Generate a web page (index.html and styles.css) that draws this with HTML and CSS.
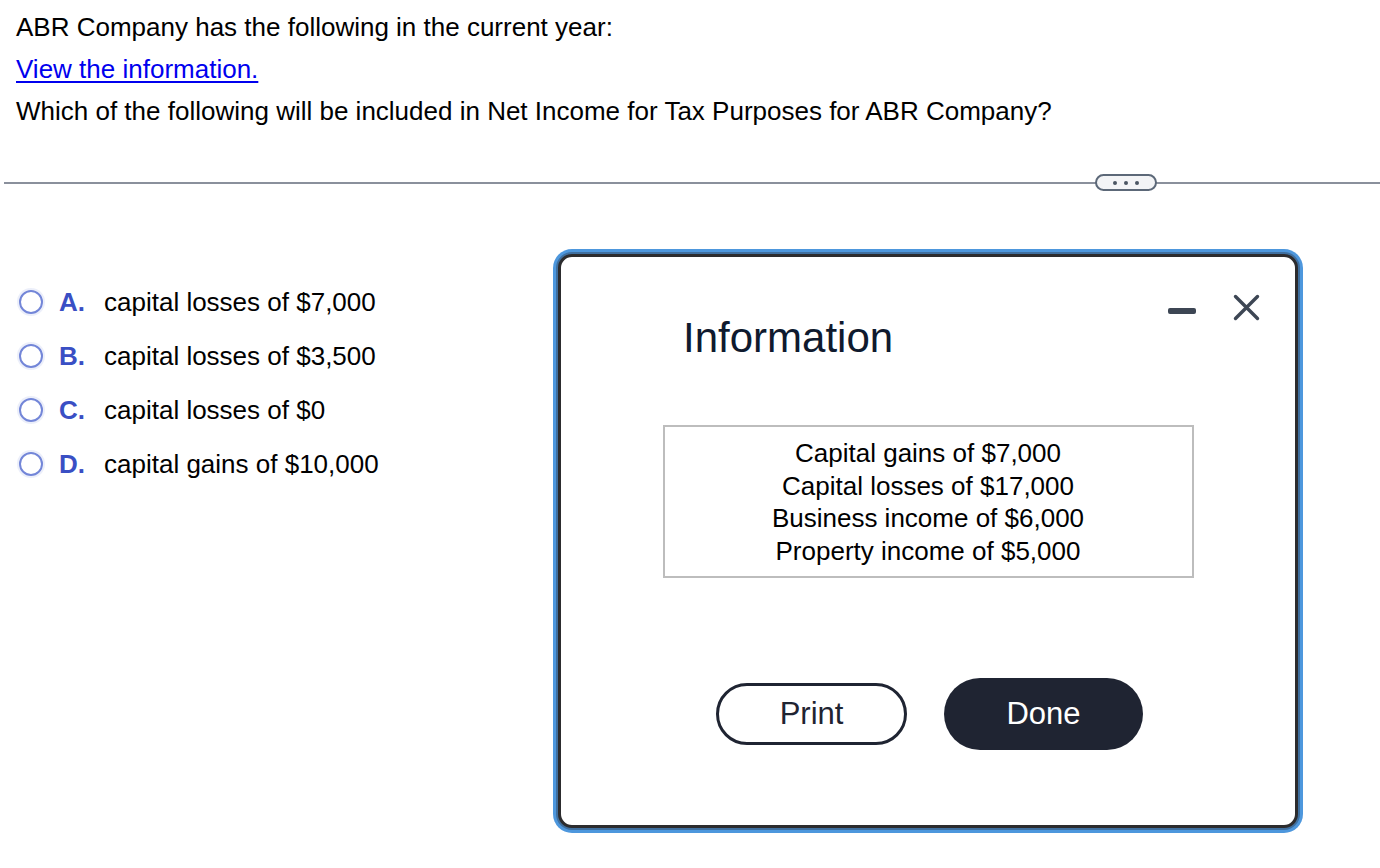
FILE: index.html
```html
<!DOCTYPE html>
<html lang="en">
<head>
<meta charset="utf-8">
<title>ABR Company</title>
<link rel="stylesheet" href="styles.css">
</head>
<body>
<div class="question">
  <p class="line">ABR Company has the following in the current year:</p>
  <p class="line"><a class="link" href="#">View the information.</a></p>
  <p class="line">Which of the following will be included in Net Income for Tax Purposes for ABR Company?</p>
</div>
<div class="divider">
  <span class="pill"><i></i><i></i><i></i></span>
</div>
<ul class="options">
  <li class="option"><span class="radio"></span><span class="letter">A.</span><span class="text">capital losses of $7,000</span></li>
  <li class="option"><span class="radio"></span><span class="letter">B.</span><span class="text">capital losses of $3,500</span></li>
  <li class="option"><span class="radio"></span><span class="letter">C.</span><span class="text">capital losses of $0</span></li>
  <li class="option"><span class="radio"></span><span class="letter">D.</span><span class="text">capital gains of $10,000</span></li>
</ul>
<div class="dialog">
  <div class="dialog-head">
    <h1 class="dialog-title">Information</h1>
    <div class="controls">
      <span class="minimize"></span>
      <svg class="close" width="27" height="27" viewBox="0 0 27 27"><path d="M2.5 2.5 L24.5 24.5 M24.5 2.5 L2.5 24.5" stroke="#3d4654" stroke-width="3.4" stroke-linecap="round" fill="none"/></svg>
    </div>
  </div>
  <div class="info-box">
    <div>Capital gains of $7,000</div>
    <div>Capital losses of $17,000</div>
    <div>Business income of $6,000</div>
    <div>Property income of $5,000</div>
  </div>
  <div class="buttons">
    <button class="btn btn-print">Print</button>
    <button class="btn btn-done">Done</button>
  </div>
</div>
</body>
</html>
```
FILE: styles.css
```css
* { box-sizing: border-box; }
html, body { margin: 0; padding: 0; background: #fff; }
body {
  font-family: "Liberation Sans", Arial, sans-serif;
  font-size: 26px;
  color: #000;
  width: 1380px;
  height: 868px;
  position: relative;
  overflow: hidden;
}
.question { padding: 6px 0 0 16px; }
.line { margin: 0; line-height: 42px; }
.link { color: #0000ee; text-decoration: underline; text-underline-offset: 3px; text-decoration-thickness: 2px; }

.divider {
  position: relative;
  margin: 50px 0 0 4px;
  height: 2px;
  background: #8a909c;
}
.pill {
  position: absolute;
  left: 1091px;
  top: -8px;
  width: 62px;
  height: 17px;
  border: 2px solid #5c6878;
  border-radius: 9px;
  background: #f3f4f6;
  display: flex;
  align-items: center;
  justify-content: center;
  gap: 7px;
}
.pill i { width: 4px; height: 4px; border-radius: 50%; background: #4b5563; }

.options { list-style: none; margin: 91px 0 0; padding: 0; }
.option {
  height: 54px;
  display: flex;
  align-items: center;
  padding-left: 19px;
}
.radio {
  width: 24px;
  height: 24px;
  border-radius: 50%;
  border: 2.5px solid #7386d8;
  box-shadow: 0 0 0 2px rgba(150, 165, 230, 0.18);
  flex: none;
}
.letter {
  width: 45px;
  margin-left: 16px;
  font-weight: bold;
  color: #3a4fc4;
}
.text { color: #000; }

.dialog {
  position: absolute;
  left: 558px;
  top: 254px;
  width: 740px;
  height: 574px;
  border: 3px solid #2c2c2e;
  border-radius: 14px;
  background: #fff;
  box-shadow: 0 0 0 2px #3f6f9f, 0 0 0 5px #4d97dd;
  display: flex;
  flex-direction: column;
}
.dialog-head {
  display: flex;
  align-items: flex-start;
  padding: 37px 35px 0 122px;
}
.dialog-title {
  margin: 19px 0 0;
  font-size: 42px;
  line-height: 50px;
  font-weight: normal;
  color: #0f1a2e;
}
.controls {
  margin-left: auto;
  display: flex;
  align-items: center;
  gap: 37px;
  height: 27px;
}
.minimize {
  width: 28px;
  height: 6px;
  border-radius: 2px;
  background: #3d4654;
  margin-top: 7px;
}
.close { display: block; }

.info-box {
  width: 531px;
  margin: 62px auto 0;
  border: 2px solid #bdbdbd;
  padding: 10px 0 9px;
  text-align: center;
  line-height: 32.5px;
  color: #000;
}
.buttons {
  display: flex;
  justify-content: center;
  align-items: center;
  gap: 37px;
  margin-top: 100px;
  padding-left: 3px;
}
.btn {
  font-family: "Liberation Sans", Arial, sans-serif;
  font-size: 31px;
  border-radius: 40px;
  padding: 0;
  cursor: pointer;
}
.btn-print {
  width: 191px;
  height: 62px;
  background: #fff;
  border: 3px solid #1f2432;
  color: #1f2432;
}
.btn-done {
  width: 199px;
  height: 72px;
  background: #1f2432;
  border: none;
  color: #fff;
}
```
